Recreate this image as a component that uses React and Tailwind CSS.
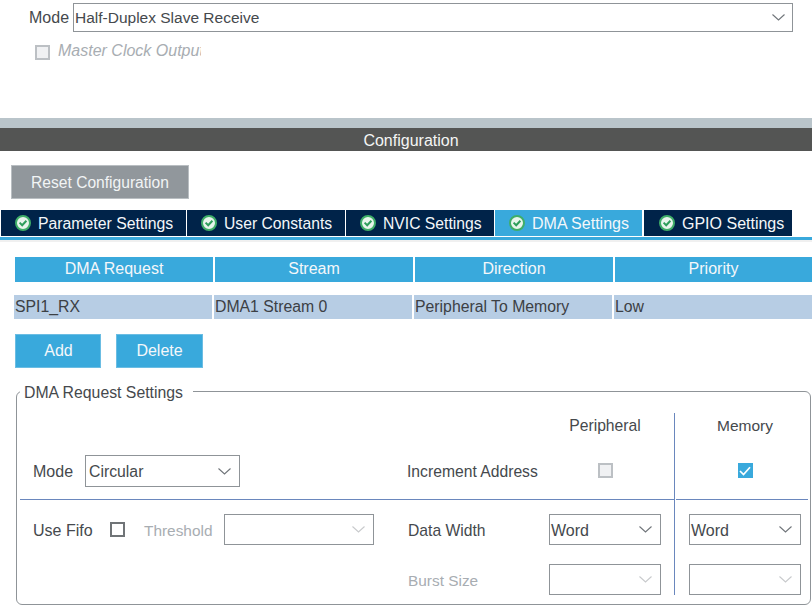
const ff = "font-['Liberation_Sans',Arial,sans-serif]";

function Chevron({ light }) {
  return (
    <svg width="13" height="7" viewBox="0 0 13 7" fill="none" className="shrink-0">
      <path d="M0.5 0.5 L6.5 6 L12.5 0.5" stroke={light ? "#c8cacc" : "#70757a"} strokeWidth="1.1" />
    </svg>
  );
}

function Select({ value, className, light }) {
  return (
    <div className={`flex items-center justify-between border border-[#8f9498] bg-white pr-[8px] text-[#45494d] ${className}`}>
      <span className="pt-[2px]">{value}</span>
      <Chevron light={light} />
    </div>
  );
}

function TabIcon() {
  return (
    <svg width="16" height="16" viewBox="0 0 16 16" className="shrink-0">
      <circle cx="8" cy="8" r="7" fill="#e8f5ec" stroke="#3fae68" strokeWidth="2" />
      <path d="M4.6 7.6 L7.2 10.2 L11.4 5.8" fill="none" stroke="#2e9e5b" strokeWidth="2" />
    </svg>
  );
}

function Tab({ label, className, active, textClass }) {
  return (
    <div className={`flex h-[26px] items-center text-[#f4f7fa] ${active ? "bg-[#39a9dc]" : "bg-[#002349]"} ${className}`}>
      <TabIcon />
      <span className={`ml-[7px] pt-[2px] ${textClass}`}>{label}</span>
    </div>
  );
}

function Check({ className }) {
  return <div className={`h-[15px] w-[15px] border-2 border-[#bcc0c4] bg-[#f0f1f3] ${className}`} />;
}

export default function App() {
  return (
    <div className={`h-[611px] w-[812px] overflow-hidden bg-white ${ff} text-[16px] leading-[18px] text-[#45494d]`}>
      <div className="h-[118px] pt-[3px]">
        <div className="flex items-center">
          <span className="ml-[29px] w-[44px]">Mode</span>
          <div className="flex h-[29px] w-[720px] items-center justify-between border border-[#8f9498] bg-white pl-[1px] pr-[7px] text-[15.5px]">
            <span>Half-Duplex Slave Receive</span>
            <Chevron />
          </div>
        </div>
        <div className="ml-[35px] mt-[10px] flex items-center">
          <Check />
          <span className="ml-[8px] w-[143px] overflow-hidden whitespace-nowrap pb-[2px] text-[16px] italic text-[#a8adb2]">Master Clock Output</span>
        </div>
      </div>

      <div className="h-[10px] bg-[#b9c4ca]" />
      <div className="flex h-[23px] items-center justify-center bg-[#545554] pl-[10px] pt-[2px] text-[#f4f5f5]">Configuration</div>

      <div className="ml-[11px] mt-[14px] flex h-[34px] w-[178px] items-center justify-center border border-[#b9bec2] bg-[#91979c] pt-[2px] text-[15.6px] text-[#f2f4f5]">
        Reset Configuration
      </div>

      <div className="ml-[1px] mt-[11px] flex gap-[1px]">
        <Tab label="Parameter Settings" className="w-[185px] pl-[14px]" textClass="text-[15.8px]" />
        <Tab label="User Constants" className="w-[158px] pl-[14px]" textClass="text-[15.7px]" />
        <Tab label="NVIC Settings" className="w-[148px] pl-[14px]" textClass="text-[15.7px]" />
        <Tab label="DMA Settings" className="w-[147px] pl-[14px]" active />
        <Tab label="GPIO Settings" className="ml-[1px] w-[148px] pl-[15px]" />
      </div>
      <div className="mt-[1px] h-[3px] bg-[#39a9dc]" />
      <div className="h-[2px] bg-[#f0f0f0]" />

      <div className="ml-[15px] mt-[15px] grid h-[25px] grid-cols-[198px_198px_198px_197px] gap-[2px] text-[#f4f7fa]">
        {["DMA Request", "Stream", "Direction", "Priority"].map((t) => (
          <div key={t} className="flex items-center justify-center bg-[#39a9dc] pb-[1px]">{t}</div>
        ))}
      </div>
      <div className="ml-[14px] mt-[13px] grid h-[24px] grid-cols-[198px_198px_198px_198px] gap-[2px] text-[15.8px]">
        {["SPI1_RX", "DMA1 Stream 0", "Peripheral To Memory", "Low"].map((t) => (
          <div key={t} className="flex items-center bg-[#b7cde4] pl-[1px] text-[#3c4044]">{t}</div>
        ))}
      </div>

      <div className="ml-[15px] mt-[15px] flex gap-[15px]">
        <div className="flex h-[34px] w-[86px] items-center justify-center border border-[#6bbde3] bg-[#39a9dc] pl-[1px] text-[#f4f7fa]">Add</div>
        <div className="flex h-[34px] w-[87px] items-center justify-center border border-[#6bbde3] bg-[#39a9dc] text-[#f4f7fa]">Delete</div>
      </div>

      <div className="relative ml-[16px] mt-[23px] flex h-[214px] w-[795px] rounded-[6px] border border-[#8f9498] pt-[21px]">
        <span className="absolute left-[3px] top-[-8px] bg-white pl-[4px] pr-[10px] text-[15.8px]">DMA Request Settings</span>

        <div className="w-[657px] shrink-0">
          <div className="ml-[3px] h-[87px] border-b border-[#6a87bd] pt-[4px]">
            <div className="flex">
              <span className="ml-[549px] w-[72px] text-center text-[15.7px]">Peripheral</span>
            </div>
            <div className="mt-[20px] flex h-[32px] items-center">
              <span className="ml-[13px] w-[52px] pt-[2px]">Mode</span>
              <Select value="Circular" className="h-[32px] w-[155px] pl-[3px] text-[15.8px]" />
              <span className="ml-[167px] w-[191px] pt-[2px] text-[15.7px]">Increment Address</span>
              <Check className="-mt-[1px]" />
            </div>
          </div>
          <div className="mt-[14px] flex h-[31px] items-center">
            <span className="ml-[16px] w-[77px] pt-[2px]">Use Fifo</span>
            <div className="h-[15px] w-[15px] border-2 border-[#707477] bg-white" />
            <span className="ml-[19px] w-[80px] pt-[2px] text-[15.4px] text-[#a8adb2]">Threshold</span>
            <Select value="" className="h-[31px] w-[150px]" light />
            <span className="ml-[34px] w-[141px] pt-[2px] text-[15.7px]">Data Width</span>
            <Select value="Word" className="h-[31px] w-[112px] pl-[1px]" />
          </div>
          <div className="mt-[19px] flex h-[31px] items-center">
            <span className="ml-[391px] w-[141px] pt-[2px] text-[15.4px] text-[#a8adb2]">Burst Size</span>
            <Select value="" className="h-[31px] w-[112px]" light />
          </div>
        </div>

        <div className="h-[182px] w-[134px] shrink-0 border-l border-[#6a87bd]">
          <div className="ml-[1px] h-[87px] w-[132px] border-b border-[#6a87bd] pl-[6px] pt-[4px]">
            <div className="text-center text-[15.5px]">Memory</div>
            <div className="mt-[20px] flex h-[32px] items-center justify-center">
              <div className="-mt-[1px] flex h-[15px] w-[15px] items-center justify-center bg-[#39a9dc]">
                <svg width="12" height="10" viewBox="0 0 12 10" fill="none">
                  <path d="M1 5 L4.5 8.5 L11 1.2" stroke="white" strokeWidth="1.7" />
                </svg>
              </div>
            </div>
          </div>
          <div className="ml-[14px] mt-[14px]">
            <Select value="Word" className="h-[31px] w-[112px] pl-[1px]" />
            <Select value="" className="mt-[19px] h-[31px] w-[112px]" light />
          </div>
        </div>
      </div>
    </div>
  );
}
